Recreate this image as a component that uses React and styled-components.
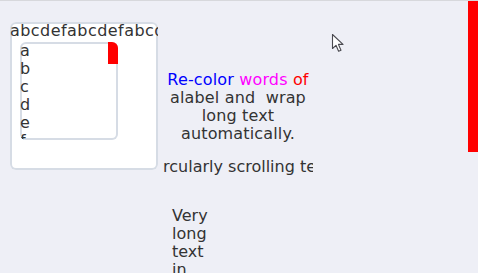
import React from "react";
import styled, { createGlobalStyle } from "styled-components";

const Global = createGlobalStyle`
  html, body { margin: 0; padding: 0; background: #eeeff6; }
  body { font-family: "DejaVu Sans", "Liberation Sans", sans-serif; }
`;

const Screen = styled.div`
  position: relative;
  width: 478px;
  height: 273px;
  box-sizing: border-box;
  border-top: 1px solid #d7d8dc;
  background: #eeeff6;
  overflow: hidden;
  display: flex;
  align-items: flex-start;
  padding: 21px 0 0 10px;
  color: #333333;
  font-size: 16px;
  line-height: 18px;
`;

const Box = styled.div`
  position: relative;
  flex: none;
  width: ${(p) => p.$size}px;
  height: ${(p) => p.$size}px;
  box-sizing: border-box;
  background: #ffffff;
  border-radius: 6px;
  box-shadow: inset 0 0 0 2px #d6dce5;
  overflow: hidden;
  margin: ${(p) => p.$margin || "0"};
`;

const Line = styled.div`
  white-space: nowrap;
  height: 18px;
  letter-spacing: ${(p) => p.$spacing || 0}px;
`;

const ScrollThumb = styled.div`
  position: absolute;
  top: 0;
  right: 0;
  width: 10px;
  height: 22px;
  background: #ff0000;
`;

const Column = styled.div`
  flex: none;
  width: 150px;
  margin: 49px 0 0 5px;
  display: flex;
  flex-direction: column;
`;

const Centered = styled.div`
  text-align: center;
  white-space: pre;
  letter-spacing: 0.15px;
`;

const Word = styled.span`
  color: ${(p) => p.$color};
`;

const Marquee = styled.div`
  margin-top: 15px;
  width: 150px;
  height: 18px;
  overflow: hidden;
  white-space: nowrap;
`;

const MarqueeText = styled.div`
  margin-left: -62px;
`;

const Narrow = styled.div`
  margin: 31px 0 0 9px;
  width: 20px;
`;

const ScreenScroll = styled.div`
  position: absolute;
  top: 0;
  right: 0;
  width: 10px;
  height: 151px;
  background: #ff0000;
`;

const Cursor = styled.svg`
  position: absolute;
  left: 331px;
  top: 32px;
`;

export default function App() {
  const letters = ["a", "b", "c", "d", "e", "f", "g"];
  return (
    <>
      <Global />
      <Screen>
        <Box $size={148}>
          <Line $spacing={0.45}>abcdefabcdefabcdef</Line>
          <Box $size={98} $margin="2px 0 0 10px">
            {letters.map((l) => (
              <Line key={l}>{l}</Line>
            ))}
            <ScrollThumb />
          </Box>
        </Box>
        <Column>
          <Centered>
            <Word $color="#0000ff">Re-color</Word>{" "}
            <Word $color="#ff00ff">words</Word>{" "}
            <Word $color="#ff0000">of</Word>
            {"\nalabel and  wrap\nlong text\nautomatically."}
          </Centered>
          <Marquee>
            <MarqueeText>It is a circularly scrolling text. It is a circularly</MarqueeText>
          </Marquee>
          <Narrow>Very long text in a narrow label</Narrow>
        </Column>
        <ScreenScroll />
        <Cursor width="13" height="20" viewBox="0 0 13 20">
          <path
            d="M1.5 1.5 L1.5 15.5 L5 12.3 L7.6 18.3 L10 17.3 L7.4 11.4 L12 11.4 Z"
            fill="#ffffff"
            stroke="#4a4a50"
            strokeWidth="1.1"
            strokeLinejoin="round"
          />
        </Cursor>
      </Screen>
    </>
  );
}
